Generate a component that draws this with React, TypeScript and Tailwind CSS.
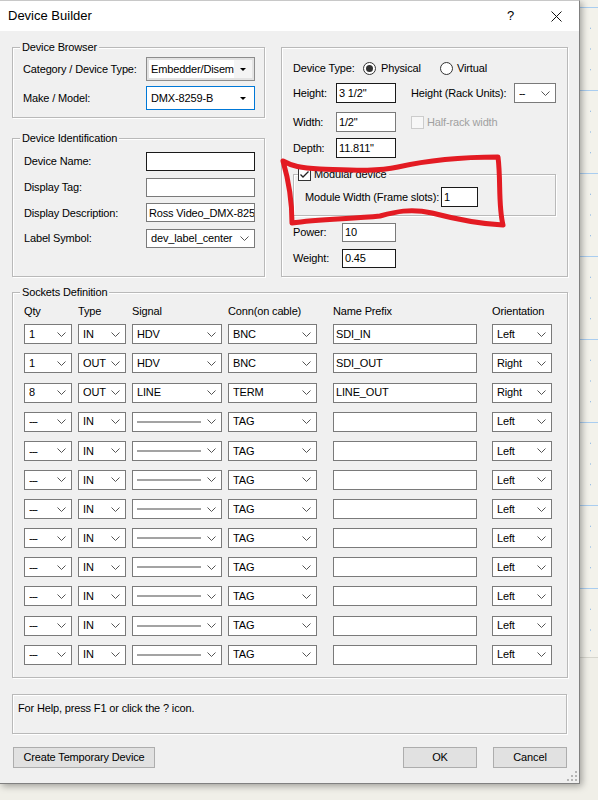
import React from "react";

const FONT = "font-['Liberation_Sans',Arial,sans-serif]";

function Chevron() {
  return (
    <svg width="9" height="5" viewBox="0 0 9 5" className="shrink-0">
      <path d="M0.5 0.5 L4.5 4.5 L8.5 0.5" fill="none" stroke="#555" strokeWidth="1" />
    </svg>
  );
}

function Tri() {
  return (
    <svg width="6" height="3" viewBox="0 0 6 3">
      <polygon points="0,0 6,0 3,3" fill="#000" />
    </svg>
  );
}

function Group({
  title,
  className,
  children,
}: {
  title?: string;
  className: string;
  children?: React.ReactNode;
}) {
  return (
    <div
      className={`relative border border-[#b9b9b9] shadow-[inset_1px_1px_0_#ffffff,1px_1px_0_#ffffff] ${className}`}
    >
      {title && (
        <span className="absolute left-[7px] -top-[8px] bg-[#f0f0f0] px-[2px] leading-[14px] whitespace-nowrap">
          {title}
        </span>
      )}
      {children}
    </div>
  );
}

function TextBox({
  value,
  className,
}: {
  value?: string;
  className: string;
}) {
  return (
    <div
      className={`flex items-center bg-white border pl-[2px] overflow-hidden whitespace-nowrap ${className}`}
    >
      {value}
    </div>
  );
}

function Combo({
  text,
  line,
  className,
}: {
  text?: string;
  line?: boolean;
  className: string;
}) {
  const dashes = text === "---" || text === "--";
  return (
    <div
      className={`flex items-center h-[20px] bg-white border border-[#7a7a7a] pl-[4px] pr-[5px] ${className}`}
    >
      <div className="flex-1 overflow-hidden whitespace-nowrap">
        {line ? (
          <div className="h-[2px] bg-[#a3a3a3] -ml-[2px] mr-[6px]" />
        ) : dashes ? (
          <span className="tracking-[-1px]">{text}</span>
        ) : (
          text
        )}
      </div>
      <Chevron />
    </div>
  );
}

type Row = {
  qty: string;
  type: string;
  signal?: string;
  conn: string;
  name: string;
  orient: string;
};

const rows: Row[] = [
  { qty: "1", type: "IN", signal: "HDV", conn: "BNC", name: "SDI_IN", orient: "Left" },
  { qty: "1", type: "OUT", signal: "HDV", conn: "BNC", name: "SDI_OUT", orient: "Right" },
  { qty: "8", type: "OUT", signal: "LINE", conn: "TERM", name: "LINE_OUT", orient: "Right" },
  ...Array.from({ length: 9 }, () => ({
    qty: "---",
    type: "IN",
    conn: "TAG",
    name: "",
    orient: "Left",
  })),
];

function Radio({ checked }: { checked?: boolean }) {
  return (
    <div className="w-[13px] h-[13px] rounded-full border border-[#333] bg-white flex items-center justify-center shrink-0">
      {checked && <div className="w-[7px] h-[7px] rounded-full bg-[#333]" />}
    </div>
  );
}

function Check({ checked, disabled }: { checked?: boolean; disabled?: boolean }) {
  return (
    <div
      className={`w-[13px] h-[13px] border shrink-0 ${
        disabled ? "border-[#cccccc] bg-[#f7f7f7]" : "border-[#333] bg-white"
      }`}
    >
      {checked && (
        <svg width="11" height="11" viewBox="0 0 11 11">
          <path d="M1.5 5.5 L4 8 L9.5 2.5" fill="none" stroke="#222" strokeWidth="1.3" />
        </svg>
      )}
    </div>
  );
}

function Dialog() {
  return (
    <div className="relative z-10 flex flex-col w-[580px] h-[784px] bg-[#f0f0f0] border-t border-t-[#c8c8c8] border-r border-b border-[#808080] shadow-[2px_2px_7px_rgba(0,0,0,0.35)]">
      {/* Title bar */}
      <div className="flex items-center h-[30px] bg-white shrink-0">
        <span className="pl-[8px] text-[13px] tracking-normal">Device Builder</span>
        <div className="flex-1" />
        <span className="text-[13px]">?</span>
        <svg width="11" height="11" viewBox="0 0 11 11" className="ml-[37px] mr-[17px]">
          <path d="M0.5 0.5 L10.5 10.5 M10.5 0.5 L0.5 10.5" stroke="#111" strokeWidth="1" />
        </svg>
      </div>

      {/* Body */}
      <div className="flex flex-col pt-[16px] pl-[12px] pr-[11px]">
        <div className="flex gap-[16px] items-start">
          {/* Left column */}
          <div className="flex flex-col w-[253px] gap-[20px]">
            <Group title="Device Browser" className="h-[71px] pt-[9px] pl-[10px] flex flex-col gap-[5px]">
              <div className="flex items-center">
                <span className="w-[123px]">Category / Device Type:</span>
                <div className="flex w-[109px] h-[24px] border border-[#8c8c8c] bg-[#e3e3e3] p-[2px]">
                  <div className="flex-1 bg-white flex items-center pl-[2px] overflow-hidden whitespace-nowrap">
                    Embedder/Disembedder
                  </div>
                  <div className="w-[18px] flex items-center justify-center bg-[#f4f4f4]">
                    <Tri />
                  </div>
                </div>
              </div>
              <div className="flex items-center">
                <span className="w-[123px]">Make / Model:</span>
                <div className="flex items-center w-[109px] h-[24px] border border-[#0078d7] bg-white pl-[4px] pr-[8px]">
                  <span className="flex-1">DMX-8259-B</span>
                  <Tri />
                </div>
              </div>
            </Group>

            <Group title="Device Identification" className="h-[139px] pt-[13px] pl-[11px] flex flex-col gap-[6.7px]">
              <div className="flex items-center">
                <span className="w-[122px]">Device Name:</span>
                <TextBox className="w-[109px] h-[19px] border-[#1a1a1a]" />
              </div>
              <div className="flex items-center">
                <span className="w-[122px]">Display Tag:</span>
                <TextBox className="w-[109px] h-[19px] border-[#7a7a7a]" />
              </div>
              <div className="flex items-center">
                <span className="w-[122px]">Display Description:</span>
                <TextBox value="Ross Video_DMX-8259-B" className="w-[109px] h-[19px] border-[#7a7a7a]" />
              </div>
              <div className="flex items-center">
                <span className="w-[122px]">Label Symbol:</span>
                <Combo text="dev_label_center" className="w-[109px] !h-[19px]" />
              </div>
            </Group>
          </div>

          {/* Right box */}
          <Group className="w-[287px] h-[230px] pl-[11px] flex flex-col">
            <div className="flex items-center h-[14px] mt-[13px]">
              <span className="w-[70px]">Device Type:</span>
              <div className="flex items-center gap-[5px] w-[77px]">
                <Radio checked />
                <span>Physical</span>
              </div>
              <div className="flex items-center gap-[4px]">
                <Radio />
                <span>Virtual</span>
              </div>
            </div>
            <div className="flex items-center h-[20px] mt-[8px]">
              <span className="w-[43px]">Height:</span>
              <TextBox value={'3 1/2"'} className="w-[60px] h-[20px] border-[#1a1a1a]" />
              <span className="ml-[15px] w-[103px]">Height (Rack Units):</span>
              <Combo text="--" className="w-[42px]" />
            </div>
            <div className="flex items-center h-[20px] mt-[9px]">
              <span className="w-[43px]">Width:</span>
              <TextBox value={'1/2"'} className="w-[60px] h-[20px] border-[#7a7a7a]" />
              <div className="ml-[15px] flex items-center gap-[3px] text-[#a0a0a0]">
                <Check disabled />
                <span>Half-rack width</span>
              </div>
            </div>
            <div className="flex items-center h-[20px] mt-[6px]">
              <span className="w-[43px]">Depth:</span>
              <TextBox value={'11.811"'} className="w-[60px] h-[20px] border-[#1a1a1a]" />
            </div>
            <Group className="mt-[16px] w-[263px] h-[42px] pt-[12px] pl-[11px]">
              <div className="absolute left-[4px] -top-[8px] h-[14px] flex items-center gap-[3px] bg-[#f0f0f0] pr-[2px]">
                <Check checked />
                <span>Modular device</span>
              </div>
              <div className="flex items-center">
                <span className="w-[136px]">Module Width (Frame slots):</span>
                <TextBox value="1" className="w-[37px] h-[20px] border-[#1a1a1a]" />
              </div>
            </Group>
            <div className="flex items-center h-[19px] mt-[7px]">
              <span className="w-[49px]">Power:</span>
              <TextBox value="10" className="w-[54px] h-[19px] border-[#7a7a7a]" />
            </div>
            <div className="flex items-center h-[19px] mt-[7px]">
              <span className="w-[49px]">Weight:</span>
              <TextBox value="0.45" className="w-[54px] h-[19px] border-[#1a1a1a]" />
            </div>
          </Group>
        </div>

        {/* Sockets */}
        <Group title="Sockets Definition" className="mt-[15px] w-[556px] h-[386px] pt-[11px] pl-[11px]">
          <div className="flex items-center h-[14px]">
            <span className="w-[48px]">Qty</span>
            <span className="w-[48px] ml-[6px]">Type</span>
            <span className="w-[90px] ml-[6px]">Signal</span>
            <span className="w-[89px] ml-[6px] whitespace-nowrap">Conn(on cable)</span>
            <span className="w-[144px] ml-[16px]">Name Prefix</span>
            <span className="w-[60px] ml-[15px]">Orientation</span>
          </div>
          <div className="flex flex-col mt-[6.3px] gap-[9.13px]">
            {rows.map((r, i) => (
              <div key={i} className="flex items-center">
                <Combo text={r.qty} className="w-[48px]" />
                <Combo text={r.type} className="w-[48px] ml-[6px]" />
                <Combo text={r.signal} line={!r.signal} className="w-[90px] ml-[6px]" />
                <Combo text={r.conn} className="w-[89px] ml-[6px]" />
                <TextBox value={r.name} className="w-[144px] h-[20px] ml-[16px] border-[#7a7a7a]" />
                <Combo text={r.orient} className="w-[60px] ml-[15px]" />
              </div>
            ))}
          </div>
        </Group>

        {/* Help */}
        <Group className="mt-[16px] w-[555px] h-[40px] pt-[6px] pl-[5px]">
          <div className="leading-[14px]">For Help, press F1 or click the ? icon.</div>
        </Group>

        {/* Buttons */}
        <div className="flex items-start mt-[13px]">
          <button className="ml-[1px] w-[142px] h-[21px] bg-[#e1e1e1] border border-[#adadad] flex items-center justify-center">
            Create Temporary Device
          </button>
          <div className="flex-1" />
          <button className="w-[74px] h-[21px] bg-[#e1e1e1] border border-[#adadad] flex items-center justify-center">
            OK
          </button>
          <button className="ml-[16px] mr-[1px] w-[74px] h-[21px] bg-[#e1e1e1] border border-[#adadad] flex items-center justify-center">
            Cancel
          </button>
        </div>
      </div>

      {/* Resize grip */}
      <svg width="10" height="10" viewBox="0 0 10 10" className="absolute right-[2px] bottom-[2px]">
        <rect x="8" y="0" width="2" height="2" fill="#b5b5b5" />
        <rect x="4" y="4" width="2" height="2" fill="#b5b5b5" />
        <rect x="8" y="4" width="2" height="2" fill="#b5b5b5" />
        <rect x="0" y="8" width="2" height="2" fill="#b5b5b5" />
        <rect x="4" y="8" width="2" height="2" fill="#b5b5b5" />
        <rect x="8" y="8" width="2" height="2" fill="#b5b5b5" />
      </svg>

      {/* Red annotation loop */}
      <svg
        width="580"
        height="784"
        viewBox="0 0 580 784"
        className="absolute left-0 -top-[1px] pointer-events-none"
      >
        <path
          d="M 283 161 C 292 166, 300 168, 320 169 C 350 170, 375 172, 398 167 C 420 162, 450 157, 498 157 C 501 180, 498 205, 503 225 C 480 224, 455 219, 432 213 C 410 208, 395 212, 380 216 C 350 219, 318 219, 292 223 C 292 205, 290 185, 283 161 Z"
          fill="none"
          stroke="#e31b23"
          strokeWidth="5"
          strokeLinejoin="round"
        />
      </svg>
    </div>
  );
}

function Strip() {
  const lines = [7, 90, 173, 256, 339, 422, 505, 588];
  const dots: number[] = [];
  lines.forEach((l) => {
    for (let j = 1; j <= 3; j++) dots.push(l + j * 20.75);
  });
  return (
    <svg width="18" height="800" viewBox="0 0 18 800" className="shrink-0">
      <rect x="0" y="0" width="18" height="800" fill="#f3f2eb" />
      {lines.map((y) => (
        <rect key={y} x="0" y={y} width="18" height="1" fill="#a9cdf0" />
      ))}
      {dots
        .filter((y) => y < 656)
        .map((y, i) => (
          <rect key={i} x="10" y={y} width="1" height="1" fill="#7fb0e3" />
        ))}
      <rect x="0" y="657" width="18" height="1" fill="#d6d5cd" />
      <rect x="0" y="658" width="18" height="142" fill="#f0efe8" />
    </svg>
  );
}

export default function App() {
  return (
    <div
      className={`flex w-[598px] h-[800px] overflow-hidden bg-[#f1f0e9] text-black text-[11px] tracking-[-0.15px] ${FONT}`}
    >
      <div className="flex flex-col w-[580px] shrink-0">
        <Dialog />
        <div className="h-[16px] bg-[#f0efe8]" />
      </div>
      <Strip />
    </div>
  );
}
